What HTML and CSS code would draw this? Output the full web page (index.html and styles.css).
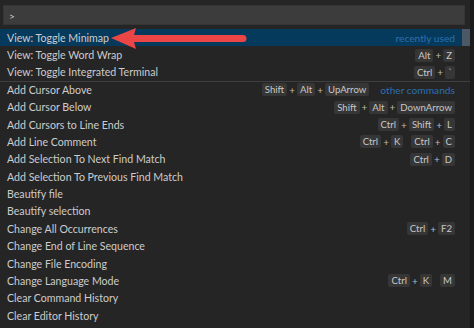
FILE: index.html
```html
<!DOCTYPE html>
<html lang="en">

<head>
  <meta charset="UTF-8">
  <title>Command Palette</title>
  <link rel="stylesheet" href="styles.css">
</head>

<body>
  <div class="palette">
    <div class="input-box">&gt;</div>

    <div class="list">
      <div class="row selected">
        <span class="label">View: Toggle Minimap</span>
        <span class="group">recently used</span>
      </div>
      <div class="row">
        <span class="label">View: Toggle Word Wrap</span>
        <span class="keys"><kbd>Alt</kbd>+<kbd>Z</kbd></span>
      </div>
      <div class="row">
        <span class="label">View: Toggle Integrated Terminal</span>
        <span class="keys"><kbd>Ctrl</kbd>+<kbd>`</kbd></span>
      </div>
      <div class="row separated">
        <span class="label">Add Cursor Above</span>
        <span class="keys"><kbd>Shift</kbd>+<kbd>Alt</kbd>+<kbd>UpArrow</kbd><span class="group">other commands</span></span>
      </div>
      <div class="row">
        <span class="label">Add Cursor Below</span>
        <span class="keys"><kbd>Shift</kbd>+<kbd>Alt</kbd>+<kbd>DownArrow</kbd></span>
      </div>
      <div class="row">
        <span class="label">Add Cursors to Line Ends</span>
        <span class="keys"><kbd>Ctrl</kbd>+<kbd>Shift</kbd>+<kbd>L</kbd></span>
      </div>
      <div class="row">
        <span class="label">Add Line Comment</span>
        <span class="keys"><kbd>Ctrl</kbd>+<kbd>K</kbd><span class="chord"></span><kbd>Ctrl</kbd>+<kbd>C</kbd></span>
      </div>
      <div class="row">
        <span class="label">Add Selection To Next Find Match</span>
        <span class="keys"><kbd>Ctrl</kbd>+<kbd>D</kbd></span>
      </div>
      <div class="row"><span class="label">Add Selection To Previous Find Match</span></div>
      <div class="row"><span class="label">Beautify file</span></div>
      <div class="row"><span class="label">Beautify selection</span></div>
      <div class="row">
        <span class="label">Change All Occurrences</span>
        <span class="keys"><kbd>Ctrl</kbd>+<kbd>F2</kbd></span>
      </div>
      <div class="row"><span class="label">Change End of Line Sequence</span></div>
      <div class="row"><span class="label">Change File Encoding</span></div>
      <div class="row">
        <span class="label">Change Language Mode</span>
        <span class="keys"><kbd>Ctrl</kbd>+<kbd>K</kbd><span class="chord"></span><kbd>M</kbd></span>
      </div>
      <div class="row"><span class="label">Clear Command History</span></div>
      <div class="row"><span class="label">Clear Editor History</span></div>

      <!-- scrollbar slider and the annotation arrow sit over the list -->
      <div class="slider"></div>
      <svg class="arrow" width="140" height="24" viewBox="0 0 140 24">
        <path d="M1 11 L26 1 L24 8 L133 8 A3.5 3.5 0 0 1 133 15 L24 15 L26 22 Z" fill="#ec4545" />
      </svg>
    </div>
  </div>
</body>

</html>
```

FILE: styles.css
```css
body {
  margin: 0;
  background-color: #1b1b1b;
  font-family: Lato, 'Noto Sans', sans-serif;
  font-size: 10.6px;
  color: #cccccc;
}

.palette {
  width: 471px;
  height: 328px;
  background-color: #252526;
  border-right: 1px solid #1a1a1a;
  padding-top: 5px;
  box-sizing: border-box;
  overflow: hidden;
}

.input-box {
  margin: 0 5px 0 3px;
  height: 20px;
  line-height: 20px;
  padding-left: 5px;
  background-color: #3c3c3c;
  border: 1px solid #353535;
  box-sizing: border-box;
  font-size: 10px;
  color: #cccccc;
}

.list {
  position: relative;
  margin-top: 4px;
}

.row {
  display: flex;
  align-items: center;
  justify-content: space-between;
  height: 17.375px;
  padding: 0 15px 0 7px;
  white-space: nowrap;
}

.row.selected {
  background-color: #063a5c;
  margin-right: 8px;
  padding-right: 7px;
}

.row.separated {
  box-shadow: inset 0 1px 0 #3f3f42;
}

.group {
  color: #2d6fae;
  font-size: 10.2px;
  margin-left: 9px;
}

.keys {
  display: flex;
  align-items: center;
  font-size: 10px;
  color: #bbbbbb;
}

kbd {
  font-family: inherit;
  font-size: 9.6px;
  background-color: #363636;
  border-radius: 2px;
  padding: 0 3px;
  height: 13px;
  line-height: 13px;
  margin: 0 2px;
  color: #c8c8c8;
}

kbd:first-child {
  margin-left: 0;
}

kbd:last-child {
  margin-right: 0;
}

.chord {
  width: 4px;
}

.slider {
  position: absolute;
  top: 0;
  right: 0;
  width: 8px;
  height: 17px;
  background-color: #4b5866;
}

.arrow {
  position: absolute;
  left: 110px;
  top: -2px;
}
```
